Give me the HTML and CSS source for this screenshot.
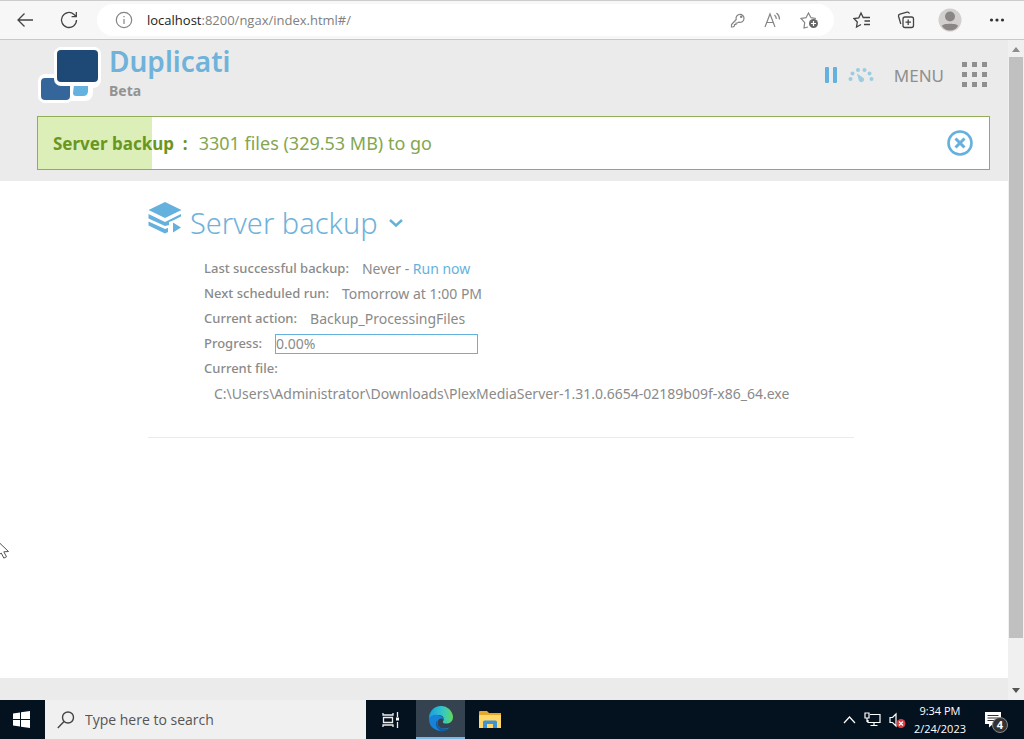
FILE: index.html
```html
<!DOCTYPE html>
<html lang="en">
<head>
<meta charset="utf-8">
<title>Duplicati</title>
<link rel="stylesheet" href="styles.css">
</head>
<body>
<div class="browser-bar">
  <button class="tool" aria-label="Back"><svg width="18" height="16" viewBox="0 0 18 16"><path d="M17 8H2M8.500 1.500 2 8l6.500 6.500"/></svg></button>
  <button class="tool" aria-label="Refresh"><svg width="20" height="20" viewBox="0 0 20 20"><path d="M17.500 10A7.500 7.500 0 1 1 15 4.400L17 6.500M17.300 2v4.700h-4.700"/></svg></button>
  <div class="address">
    <button class="site-info" aria-label="Site information"><svg width="18" height="18" viewBox="0 0 18 18"><circle cx="9" cy="9" r="7.700"/><path d="M9 8v5M9 5v1.300"/></svg></button>
    <div class="url" role="textbox" contenteditable="true" spellcheck="false" aria-label="Address"><span class="host">localhost</span>:8200/ngax/index.html#/</div>
    <button class="inner-tool" aria-label="Saved passwords"><svg width="16" height="16" viewBox="0 0 16 16"><path d="M6.200 7.500a4 4 0 1 1 2.600 2.600L7.500 11H6v1.500H4.500V14L3 15H1.500v-2.500z"/><circle cx="11.200" cy="4.800" r=".7"/></svg></button>
    <button class="inner-tool" aria-label="Read aloud"><svg width="18" height="16" viewBox="0 0 18 16"><path d="M1 15 6 2l5 13M2.800 10.500h6.500M10.500 3a5 5 0 0 1 1.800 4M12.500 1a8 8 0 0 1 3 6.500"/></svg></button>
    <button class="inner-tool" aria-label="Add to favorites"><svg width="20" height="18" viewBox="0 0 20 18"><path d="M8 16l-4 1 .7-5.300L1 7.500l5-.8L8.500 2 11 6.700l5 .8"/><circle cx="13.500" cy="12.500" r="4.500" class="dark-fill"/><path d="M11 12.500h5M13.500 10v5" class="white-line"/></svg></button>
  </div>
  <button class="tool" aria-label="Favorites"><svg width="18" height="18" viewBox="0 0 18 18"><path d="M8 13.500 3.500 16l.8-5L1 7.500l4.800-.7L8 2l2.200 4.500H17M11.500 10H17M11 13.500h6"/></svg></button>
  <button class="tool" aria-label="Collections"><svg width="18" height="18" viewBox="0 0 18 18"><rect x="6" y="6" width="10.500" height="10.500" rx="2"/><path d="M11.200 8.500v5.500M8.500 11.200H14M3.800 13 1.600 5.500a2 2 0 0 1 1.400-2.400L10 1.200a2 2 0 0 1 2.400 1.400"/></svg></button>
  <button class="tool" aria-label="Profile"><svg width="24" height="24" viewBox="0 0 24 24"><g stroke="none"><circle cx="12" cy="12" r="11.500" fill="#d2d0ce"/><circle cx="12" cy="8.500" r="5" fill="#8a8684"/><path d="M4 18c0-3 16-3 16 0-2 3.500-5 4.500-8 4.500S6 21.500 4 18z" fill="#8a8684"/></g></svg></button>
  <button class="tool more" aria-label="Settings and more"><svg width="16" height="4" viewBox="0 0 16 4"><g fill="#333" stroke="none"><circle cx="2.500" cy="2" r="1.600"/><circle cx="8" cy="2" r="1.600"/><circle cx="13.500" cy="2" r="1.600"/></g></svg></button>
</div>

<div class="viewport">
  <div class="app">
    <header class="header">
      <div class="masthead">
        <svg class="logo" width="64" height="58" viewBox="0 0 64 58"><g transform="translate(1 1)"><g fill="#fff"><rect x="16" y="0" width="47" height="41" rx="8"/><rect x="0" y="27" width="35" height="29" rx="7"/><path d="M28 32h27v13q0 9-9 9H28z"/></g><rect x="3" y="31" width="29" height="22" rx="4" fill="#34659b"/><path d="M36 38h14v6q0 5-5 5h-7q-3 0-3-3z" fill="#65b1e0"/><rect x="16" y="0" width="47" height="39" rx="7" fill="#fff"/><rect x="19" y="3" width="41" height="32" rx="4" fill="#1e4876"/></g></svg>
        <div class="brand">
          <a class="name" href="#/">Duplicati</a>
          <span class="channel">Beta</span>
        </div>
        <button class="icon-button" aria-label="Pause"><svg width="14" height="18" viewBox="0 0 14 18"><rect x="1" y="1" width="4" height="16" rx="1"/><rect x="9" y="1" width="4" height="16" rx="1"/></svg></button>
        <button class="icon-button throttle" aria-label="Throttle"><svg width="26" height="16" viewBox="0 0 26 16"><g><circle cx="2.500" cy="12" r="2"/><circle cx="4.500" cy="6.500" r="2"/><circle cx="10" cy="3" r="2"/><circle cx="16.500" cy="3" r="2"/><circle cx="21.500" cy="6.500" r="2"/><circle cx="23.500" cy="12" r="2"/><path d="M9 6.500 15.500 11q1.500 2-.5 3.500t-4-.5z"/></g></svg></button>
        <button class="menu">MENU <svg width="26" height="26" viewBox="0 0 26 26"><path d="M0 0h5v5H0zM10 0h5v5h-5zM20 0h5v5h-5zM0 10h5v5H0zM10 10h5v5h-5zM20 10h5v5h-5zM0 20h5v5H0zM10 20h5v5h-5zM20 20h5v5h-5z"/></svg></button>
      </div>
      <div class="task">
        <strong class="task-name">Server backup &nbsp;:</strong>
        <span class="task-state">3301 files (329.53 MB) to go</span>
        <button class="icon-button" aria-label="Stop"><svg width="28" height="28" viewBox="0 0 28 28"><circle cx="14" cy="14" r="11.500" fill="none" stroke="#65b1dd" stroke-width="2.600"/><path d="m9.500 9.500 9 9m0-9-9 9" stroke="#65b1dd" stroke-width="3"/></svg></button>
      </div>
    </header>

    <main class="content">
      <section class="backup">
        <h1 class="title">
          <svg width="34" height="32" viewBox="0 0 34 32"><path d="M17 0 33.500 8 17 16 .5 8zM.5 12 17 20l16-8v2.500l-8 4-4 1.500v3L17 24 .5 16.500zM.5 19.500 17 27l3-1v4l-3 1.500L.5 23.500zM25 20.500l8 5-8 5z"/></svg>
          <button class="title-button">Server backup <svg width="16" height="10" viewBox="0 0 16 10"><path d="m2 2 6 5.500L14 2" class="chevron"/></svg></button>
        </h1>
        <dl class="details">
          <div class="row"><dt>Last successful backup:</dt><dd>Never - <a href="#/run">Run now</a></dd></div>
          <div class="row"><dt>Next scheduled run:</dt><dd>Tomorrow at 1:00 PM</dd></div>
          <div class="row"><dt>Current action:</dt><dd>Backup_ProcessingFiles</dd></div>
          <div class="row"><dt>Progress:</dt><dd class="progress" role="progressbar" aria-label="Progress" aria-valuenow="0">0.00%</dd></div>
          <div class="row wrap"><dt>Current file:</dt><dd class="file">C:\Users\Administrator\Downloads\PlexMediaServer-1.31.0.6654-02189b09f-x86_64.exe</dd></div>
        </dl>
      </section>
    </main>
    <footer class="footer"></footer>
  </div>
  <div class="scrollbar">
    <svg width="8" height="5" viewBox="0 0 8 5"><path d="M4 0l4 5H0z" fill="#8d8d8d"/></svg>
    <div class="thumb"></div>
    <svg width="8" height="5" viewBox="0 0 8 5"><path d="M0 0h8L4 5z" fill="#555"/></svg>
  </div>
  <svg class="pointer" width="10" height="20" viewBox="0 0 10 20"><path d="M-3 1.500 8.500 12.500l-4.700.3 2.700 5-2.700 1.300-2.500-5L-3 17z" fill="#fff" stroke="#555"/></svg>
</div>

<div class="taskbar">
  <button class="start" aria-label="Start"><svg width="17" height="17" viewBox="0 0 17 17"><path d="M0 2.400 7 1.400V8H0zM8 1.200 17 0v8H8zM0 9h7v6.600l-7-1zM8 9h9v8l-9-1.200z" fill="#fff"/></svg></button>
  <label class="search"><svg width="18" height="18" viewBox="0 0 18 18"><circle cx="11" cy="6.500" r="5.500"/><path d="M7 10.500.8 17"/></svg><input type="text" placeholder="Type here to search" aria-label="Search"></label>
  <button class="task-button" aria-label="Task view"><svg width="18" height="16" viewBox="0 0 18 16"><path d="M1 1v2h10V1M1 15v-2h10v2M1.500 5.500h9v5h-9zM15.500 0v5M15.500 10v6" fill="none" stroke="#eee" stroke-width="1.300"/><rect x="14" y="5.500" width="3" height="3" fill="#fff"/></svg></button>
  <button class="task-button active" aria-label="Microsoft Edge"><svg width="26" height="26" viewBox="0 0 26 26"><defs><linearGradient id="edge-top" x1="0" x2="1"><stop offset="0" stop-color="#1a9de0"/><stop offset=".6" stop-color="#35c8c4"/><stop offset="1" stop-color="#62d957"/></linearGradient></defs><path d="M1 13A12 12 0 0 1 25 11c0 5-4 7-8 6.500-2.500-.3-2.500-1.500-1.500-3 1-3-1-5-4-5.500C7 8.500 3 10 1 13z" fill="url(#edge-top)"/><path d="M1 13c2-4 6-5 9-4 4 1 6 3 5.500 5-2-3-6-1-6 3 0 5 6 7 12 4.500A12 12 0 0 1 1 13z" fill="#1683d8"/><path d="M9.500 14c-2 5 2 9 7 9 3 0 5-.5 6.500-2.500-3 4-7 5-10 4.500C8 23 6.500 17 9.500 14z" fill="#125aa5"/></svg></button>
  <button class="task-button" aria-label="File Explorer"><svg width="22" height="20" viewBox="0 0 22 20"><path d="M0 2q0-1 1-1h7l2 2h12v15H0z" fill="#e5a82c"/><path d="M0 5h22v13H0z" fill="#ffd869"/><path d="M4 18v-6q0-1.500 1.500-1.500h11Q18 10.500 18 12v6h-4v-4H8v4z" fill="#3d94d2"/></svg></button>
  <div class="tray">
    <button class="tray-button" aria-label="Show hidden icons"><svg width="13" height="9" viewBox="0 0 13 9"><path d="m1 8 5.500-6L12 8"/></svg></button>
    <button class="tray-button" aria-label="Network"><svg width="17" height="15" viewBox="0 0 17 15"><path d="M6 2.500h10v8H4V8M1 1h4v5H1zM3 6v4M6.500 13.500h7M10 10.500v3"/></svg></button>
    <button class="tray-button" aria-label="Volume muted"><svg width="17" height="16" viewBox="0 0 17 16"><path d="M1 5.500h2.500L7 2v12l-3.500-3.500H1z"/><circle cx="12" cy="11.500" r="4.500" fill="#dd3b3f" stroke="none"/><path d="m10 9.500 4 4m0-4-4 4"/></svg></button>
    <time class="clock" datetime="2023-02-24T21:34"><span>9:34 PM</span><span>2/24/2023</span></time>
    <button class="tray-button" aria-label="Notifications, 4 new"><span class="notice"><svg width="18" height="17" viewBox="0 0 18 17"><path d="M1 1h16v12H9l-4 3.500V13H1z" fill="#fff" stroke="none"/><path d="M3.500 4.500h11M3.500 7h11M3.500 9.500h7" stroke="#333"/></svg><span class="badge">4</span></span></button>
  </div>
</div>
</body>
</html>
```
FILE: styles.css
```css
* { box-sizing: border-box; }
body {
  margin: 0;
  height: 100vh;
  display: flex;
  flex-direction: column;
  overflow: hidden;
  font-family: "Noto Sans", sans-serif;
  color: #8a8a8a;
  background: #fff;
}
button {
  display: flex;
  align-items: center;
  justify-content: center;
  padding: 0;
  border: 0;
  background: none;
  font: inherit;
  color: inherit;
}
svg { display: block; flex: none; }
a { color: #65b1dd; text-decoration: none; }

/* Browser toolbar */
.browser-bar {
  flex: none;
  display: flex;
  align-items: center;
  gap: 20px;
  height: 40px;
  padding: 0 15px 0 13px;
  background: #f7f7f7;
  border-top: 1px solid #ccc;
  border-bottom: 1px solid #c8c8c8;
}
.browser-bar svg { fill: none; stroke: #444; stroke-width: 1.3; }
.tool { min-width: 24px; height: 30px; }
.tool:nth-child(2) { margin-right: -4px; }
.tool.more { margin-left: 3px; }
.address {
  flex: 1;
  display: flex;
  align-items: center;
  gap: 18px;
  height: 32px;
  margin-right: -4px;
  padding: 0 14px 0 18px;
  border-radius: 16px;
  background: #fff;
}
.address svg { stroke: #858585; stroke-width: 1.2; }
.address .dark-fill { fill: #666; stroke: none; }
.address .white-line { stroke: #fff; }
.url {
  flex: 1;
  margin-left: -4px;
  font-family: "Open Sans", sans-serif;
  font-size: 13px;
  color: #808080;
  white-space: nowrap;
}
.host { color: #222; }

/* Page */
.viewport { position: relative; flex: 1; min-height: 0; display: flex; }
.app { flex: 1; min-width: 0; display: flex; flex-direction: column; }
.header { padding: 6px 18px 11px 37px; background: #ebebeb; }
.masthead { display: flex; align-items: center; height: 58px; padding-right: 2px; }
.brand {
  flex: 1;
  display: flex;
  flex-direction: column;
  gap: 4px;
  margin-left: 8px;
  padding-bottom: 4px;
}
.name { font-size: 28px; line-height: 32px; font-weight: 600; color: #6fb2da; }
.channel { font-size: 14px; line-height: 20px; font-weight: 700; color: #939393; }
.icon-button svg { fill: #65b1dd; }
.throttle { margin: 0 20px 0 10px; }
.throttle svg { fill: #9bcde0; }
.menu { gap: 18px; font-size: 17px; color: #8f8f8f; }
.menu svg { fill: #8f8f8f; }
.task {
  display: flex;
  align-items: center;
  gap: 11px;
  height: 54px;
  margin-top: 12px;
  padding: 0 15px;
  border: 1px solid #8fae57;
  background: linear-gradient(#dcefb9, #dcefb9) no-repeat 0 0 / 12% 100% #fff;
  color: #83a650;
  font-size: 17px;
}
.task-name { color: #6a961f; }
.task-state { flex: 1; font-size: 18px; line-height: 26px; }
.content { flex: 1; padding: 21px 154px 0 148px; background: #fff; }
.backup { border-bottom: 1px solid #ebebeb; padding-bottom: 31px; }
.title {
  display: flex;
  align-items: flex-start;
  gap: 8px;
  margin: 0;
  font-size: 29px;
  line-height: 42px;
  font-weight: 300;
  color: #6fb2da;
}
.title > svg { fill: #65b1dd; }
.title-button { gap: 10px; }
.chevron { fill: none; stroke: #65b1dd; stroke-width: 2.4; }
.details { margin: 12px 0 0 56px; font-size: 14px; line-height: 25px; }
.row { display: flex; align-items: center; gap: 13px; }
.wrap { flex-wrap: wrap; row-gap: 0; }
dt { font-size: 13px; font-weight: 500; }
dd { margin: 0; }
.progress { width: 203px; line-height: 18px; border: 1px solid #65b1dd; }
.file { flex-basis: 100%; padding-left: 10px; }
.footer { height: 22px; background: #ebebeb; }
.scrollbar {
  flex: none;
  display: flex;
  flex-direction: column;
  align-items: center;
  width: 16px;
  padding: 7px 1px;
  background: #f0f0f0;
}
.thumb { width: 100%; height: 90%; margin: 5px 0 auto; background: #c0c0c0; }
.pointer { position: absolute; left: 0; top: 499px; }

/* Taskbar */
.taskbar {
  flex: none;
  display: flex;
  height: 39px;
  background: #04111f;
  font-family: "Open Sans", sans-serif;
  color: #fff;
}
.start { width: 45px; padding-right: 3px; }
.search {
  display: flex;
  align-items: center;
  gap: 10px;
  width: 321px;
  padding-left: 12px;
  background: #f0f0f0;
}
.search svg { fill: none; stroke: #444; stroke-width: 1.4; }
.search input {
  flex: 1;
  min-width: 0;
  padding: 0;
  border: 0;
  background: none;
  font: 14px "Open Sans", sans-serif;
}
.search input::placeholder { color: #555; opacity: 1; }
.task-button { width: 50px; }
.active { width: 49px; background: #34434f; border-bottom: 2px solid #76b9ed; }
.tray { display: flex; align-items: center; gap: 8px; margin-left: auto; padding-right: 16px; }
.tray svg { fill: none; stroke: #fff; stroke-width: 1.2; }
.clock {
  display: flex;
  flex-direction: column;
  align-items: center;
  font-size: 11px;
  line-height: 18px;
}
.notice { position: relative; display: block; margin: 0 6px 0 10px; }
.badge {
  position: absolute;
  left: 8px;
  top: 6px;
  width: 16px;
  height: 16px;
  border: 1px solid #888;
  border-radius: 50%;
  background: #333;
  font-size: 11px;
  line-height: 14px;
  font-weight: 700;
  text-align: center;
}
```
